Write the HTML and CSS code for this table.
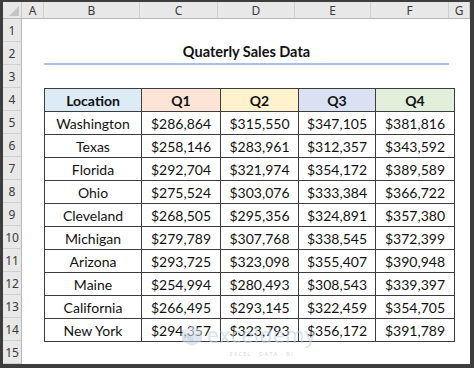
FILE: index.html
```html
<!DOCTYPE html>
<html lang="en">
<head>
    <meta charset="UTF-8">
    <meta name="viewport" content="width=device-width, initial-scale=1.0">
    <title>Quaterly Sales Data</title>
    <link rel="stylesheet" href="styles.css">
</head>
<body>

<div class="frame">
    <div class="sheet">
        <div class="corner"><span class="corner-mark"></span></div>
        <div class="ch">A</div>
        <div class="ch">B</div>
        <div class="ch">C</div>
        <div class="ch">D</div>
        <div class="ch">E</div>
        <div class="ch">F</div>
        <div class="ch">G</div>

        <div class="rh">1</div>
        <div class="rh">2</div>
        <div class="rh">3</div>
        <div class="rh">4</div>
        <div class="rh">5</div>
        <div class="rh">6</div>
        <div class="rh">7</div>
        <div class="rh">8</div>
        <div class="rh">9</div>
        <div class="rh">10</div>
        <div class="rh">11</div>
        <div class="rh">12</div>
        <div class="rh">13</div>
        <div class="rh">14</div>
        <div class="rh">15</div>

        <div class="title">Quaterly Sales Data</div>

        <table class="sales">
            <thead>
                <tr>
                    <th class="loc">Location</th>
                    <th class="q1">Q1</th>
                    <th class="q2">Q2</th>
                    <th class="q3">Q3</th>
                    <th class="q4">Q4</th>
                </tr>
            </thead>
            <tbody>
                <tr><td>Washington</td><td>$286,864</td><td>$315,550</td><td>$347,105</td><td>$381,816</td></tr>
                <tr><td>Texas</td><td>$258,146</td><td>$283,961</td><td>$312,357</td><td>$343,592</td></tr>
                <tr><td>Florida</td><td>$292,704</td><td>$321,974</td><td>$354,172</td><td>$389,589</td></tr>
                <tr><td>Ohio</td><td>$275,524</td><td>$303,076</td><td>$333,384</td><td>$366,722</td></tr>
                <tr><td>Cleveland</td><td>$268,505</td><td>$295,356</td><td>$324,891</td><td>$357,380</td></tr>
                <tr><td>Michigan</td><td>$279,789</td><td>$307,768</td><td>$338,545</td><td>$372,399</td></tr>
                <tr><td>Arizona</td><td>$293,725</td><td>$323,098</td><td>$355,407</td><td>$390,948</td></tr>
                <tr><td>Maine</td><td>$254,994</td><td>$280,493</td><td>$308,543</td><td>$339,397</td></tr>
                <tr><td>California</td><td>$266,495</td><td>$293,145</td><td>$322,459</td><td>$354,705</td></tr>
                <tr><td>New York</td><td>$294,357</td><td>$323,793</td><td>$356,172</td><td>$391,789</td></tr>
            </tbody>
        </table>

        <div class="watermark">
            <svg class="wm-icon" width="24" height="22" viewBox="0 0 24 22">
                <path d="M12 1 L22 6 L22 16 L12 21 L2 16 L2 6 Z" fill="#c9d5e6"/>
                <path d="M12 1 L22 6 L12 11 L2 6 Z" fill="#dde5f0"/>
                <path d="M7 9 L13 12 L13 17 L7 14 Z" fill="#b3c3da"/>
            </svg>
            <div class="wm-text">
                <span class="wm-name">exceldemy</span>
                <span class="wm-tag">EXCEL · DATA · BI</span>
            </div>
        </div>
    </div>
</div>

</body>
</html>
```

FILE: styles.css
```css
body {
    margin: 0;
    padding: 0;
    background-color: #3d3d3d;
    font-family: Lato, 'Liberation Sans', sans-serif;
}

.frame {
    width: 474px;
    height: 368px;
    padding: 2px 0 0 3px;
    box-sizing: border-box;
}

.sheet {
    position: relative;
    display: grid;
    grid-template-columns: 19px 22px 96px 78px 77px 76px 78px 21px;
    grid-template-rows: 17px repeat(15, 23px);
    width: 467px;
    background-color: #ffffff;
}

.corner {
    position: relative;
    background-color: #e8e8e8;
    border-right: 1px solid #c6c6c6;
    border-bottom: 1px solid #b8b8b8;
    box-sizing: border-box;
}

.corner-mark {
    position: absolute;
    right: 2px;
    bottom: 2px;
    width: 0;
    height: 0;
    border-left: 10px solid transparent;
    border-bottom: 10px solid #c4c4c4;
}

.ch {
    display: flex;
    align-items: center;
    justify-content: center;
    background-color: #e8e8e8;
    border-right: 1px solid #cfcfcf;
    border-bottom: 1px solid #b8b8b8;
    box-sizing: border-box;
    font-family: 'Noto Sans', sans-serif;
    font-size: 12px;
    color: #3a3a3a;
}

.rh {
    grid-column: 1;
    display: flex;
    align-items: flex-end;
    justify-content: center;
    padding-bottom: 2px;
    background-color: #e8e8e8;
    border-right: 1px solid #b8b8b8;
    border-bottom: 1px solid #d0d0d0;
    box-sizing: border-box;
    font-family: 'Noto Sans', sans-serif;
    font-size: 12px;
    color: #3a3a3a;
}

.title {
    grid-column: 3 / 8;
    grid-row: 3;
    display: flex;
    align-items: flex-end;
    justify-content: center;
    padding-bottom: 3px;
    border-bottom: 2px solid #a7c2e6;
    font-weight: bold;
    font-size: 14.5px;
    color: #111;
}

.sales {
    grid-column: 3 / 8;
    grid-row: 5 / 16;
    border-collapse: collapse;
    width: 405px;
    height: 254px;
    align-self: start;
    table-layout: fixed;
}

.sales th,
.sales td {
    border: 1px solid #3c3c3c;
    height: 22px;
    padding: 0;
    text-align: center;
    font-size: 14px;
    color: #111;
}

.sales th {
    font-weight: bold;
}

.loc { width: 96px; background-color: #ddebf7; }
.q1 { width: 78px; background-color: #fce4d6; }
.q2 { width: 77px; background-color: #fff2cc; }
.q3 { width: 76px; background-color: #d9e1f2; }
.q4 { width: 78px; background-color: #e2efda; }

.watermark {
    position: absolute;
    left: 177px;
    top: 322px;
    display: flex;
    align-items: flex-start;
    gap: 3px;
    opacity: 0.6;
}

.wm-icon {
    margin-top: 1px;
}

.wm-text {
    display: flex;
    flex-direction: column;
    align-items: center;
}

.wm-name {
    font-family: 'Open Sans', sans-serif;
    font-size: 21px;
    line-height: 22px;
    color: #c3d0e4;
    letter-spacing: 0.5px;
}

.wm-tag {
    font-family: 'Open Sans', sans-serif;
    font-size: 6px;
    letter-spacing: 1px;
    color: #b8c2cf;
    margin-top: 4px;
}
```
